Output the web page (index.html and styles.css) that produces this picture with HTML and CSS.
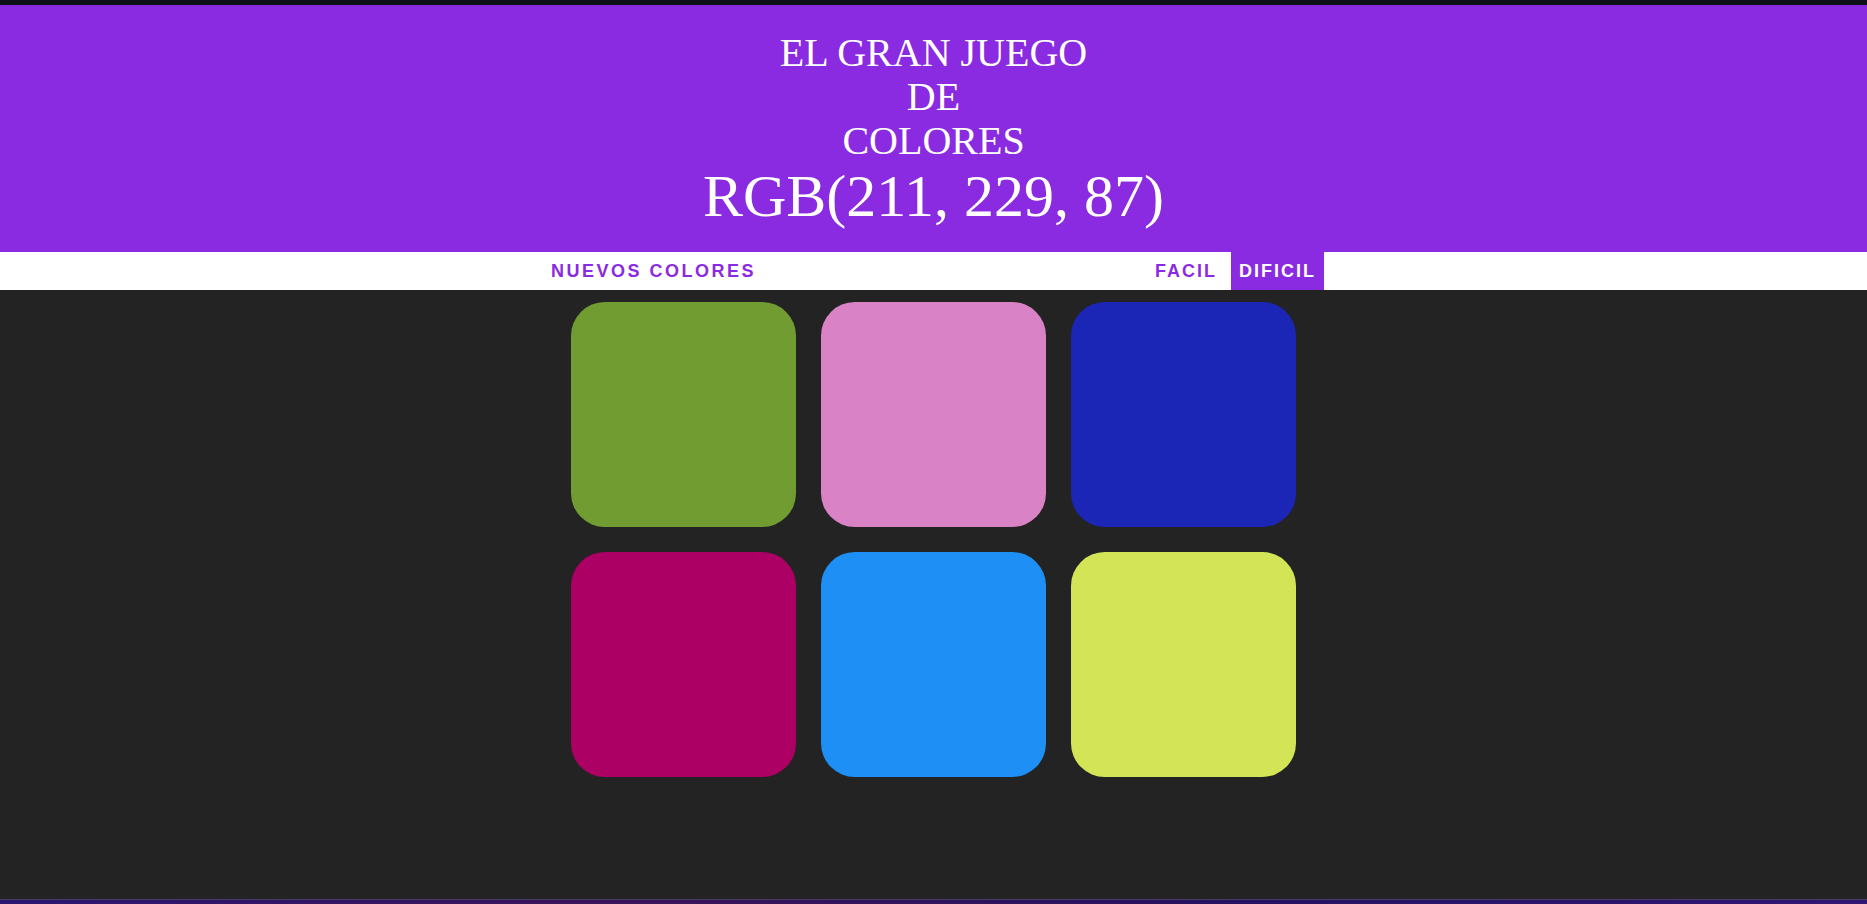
FILE: index.html
```html
<!DOCTYPE html>
<html lang="es">
<head>
    <meta charset="UTF-8">
    <meta name="viewport" content="width=device-width, initial-scale=1.0">
    <title>El gran juego de colores</title>
    <link rel="stylesheet" href="styles.css">
</head>
<body>
    <div class="topline"></div>
    <h1 class="title">
        El gran juego<br>
        de<br>
        colores<br>
        <span id="colorDisplay">RGB(211, 229, 87)</span>
    </h1>

    <div class="stripe">
        <div class="stripe-inner">
            <button id="reset">Nuevos colores</button>
            <div class="modes">
                <button class="mode">Facil</button>
                <button class="mode selected">Dificil</button>
            </div>
        </div>
    </div>

    <div id="container"></div>

    <div class="bottomline"></div>

    <script>
        // colores de la partida actual, el ultimo es el que hay que adivinar
        var colors = [
            "rgb(113, 156, 49)",
            "rgb(217, 131, 198)",
            "rgb(28, 38, 182)",
            "rgb(173, 0, 100)",
            "rgb(30, 143, 245)",
            "rgb(211, 229, 87)"
        ];
        var pickedColor = colors[5];

        var container = document.getElementById("container");
        colors.forEach(function (color) {
            var square = document.createElement("div");
            square.className = "square";
            square.style.background = color;
            container.appendChild(square);
        });

        document.getElementById("colorDisplay").textContent = pickedColor.toUpperCase();
    </script>
</body>
</html>
```

FILE: styles.css
```css
body {
    margin: 0;
    padding: 0;
    background-color: #232323;
    font-family: "Liberation Sans", Arial, sans-serif;
    min-height: 100vh;
    display: flex;
    flex-direction: column;
}
.topline {
    height: 5px;
    background-color: #0d1117;
}
.title {
    margin: 0;
    padding: 26px 0 23px;
    background-color: #8a2be2;
    color: white;
    text-align: center;
    text-transform: uppercase;
    font-family: "Liberation Serif", "Times New Roman", serif;
    font-weight: normal;
    font-size: 40px;
    line-height: 1.1;
}
#colorDisplay {
    font-size: 150%;
}
.stripe {
    background-color: white;
    height: 38px;
}
.stripe-inner {
    width: 781px;
    height: 100%;
    margin: 0 auto;
    display: flex;
    justify-content: space-between;
}
.modes {
    display: flex;
    gap: 6px;
}
button {
    border: none;
    background: none;
    height: 38px;
    padding: 0 8px;
    margin: 0;
    text-transform: uppercase;
    font-family: inherit;
    font-weight: 700;
    font-size: 18px;
    letter-spacing: 2px;
    color: #8a2be2;
    cursor: pointer;
    outline: none;
}
#reset {
    letter-spacing: 2.5px;
}
button:hover, .selected {
    background-color: #8a2be2;
    color: white;
}
#container {
    width: 750px;
    box-sizing: border-box;
    margin: 0 auto;
    padding: 12px 12.5px;
    display: grid;
    grid-template-columns: repeat(3, 225px);
    gap: 25px;
    justify-content: center;
}
.square {
    width: 225px;
    height: 225px;
    border-radius: 15%;
    transition: background 0.6s;
    cursor: pointer;
}
.bottomline {
    margin-top: auto;
    height: 4px;
    border-top: 1px solid #4b3b6b;
    background: linear-gradient(to right, #2a1670, #3a1458, #241260, #2f1672);
}
```
